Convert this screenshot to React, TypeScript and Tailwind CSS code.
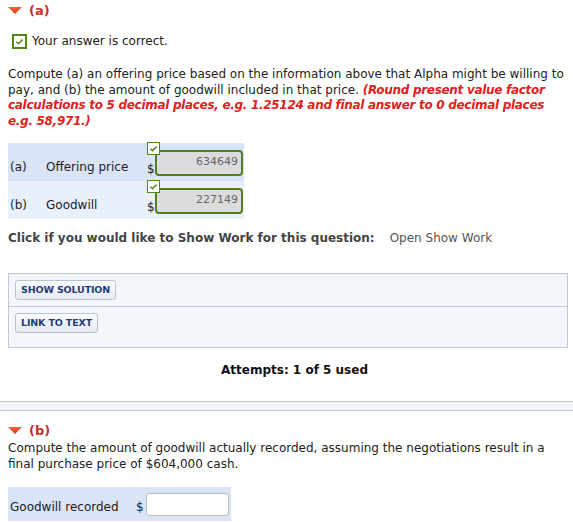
// Question part (a) answered + part (b) pending
import React from 'react';

const Triangle = () => (
  <svg width="14" height="7" viewBox="0 0 14 7" className="shrink-0">
    <defs>
      <linearGradient id="tri" x1="0" y1="0" x2="0" y2="1">
        <stop offset="0" stopColor="#f4623a" />
        <stop offset="1" stopColor="#e2360f" />
      </linearGradient>
    </defs>
    <path d="M0 0 L14 0 L7 7 Z" fill="url(#tri)" />
  </svg>
);

const Check = ({ size }: { size: number }) => (
  <svg width={size} height={size} viewBox="0 0 10 10">
    <path d="M2.2 5.2 L4.2 7 L7.8 3.2" fill="none" stroke="#4c8a14" strokeWidth="1.4" />
  </svg>
);

const Button = ({ label }: { label: string }) => (
  <button className="h-[20px] px-[5px] rounded-[3px] border border-[#b9c4d3] bg-gradient-to-b from-[#fbfcfe] to-[#e6ebf2] text-[9.5px] font-bold text-[#1e3c78] leading-none tracking-[-0.15px]">
    {label}
  </button>
);

const AnswerRow = ({
  tag,
  label,
  value,
  bg,
}: {
  tag: string;
  label: string;
  value: string;
  bg: string;
}) => (
  <div className={`flex items-end h-[38px] pb-[5px] ${bg}`}>
    <div className="w-[38px] pl-[2px] pb-[1px]">{tag}</div>
    <div className="w-[101px] pb-[1px]">{label}</div>
    <div className="w-[8px] leading-[14px]">$</div>
    <div className="relative">
      <div className="w-[88px] h-[26px] rounded-[4px] border-2 border-[#527f17] bg-[#dcdcdc] text-right pr-[3px] pt-[3px] text-[11px] leading-[13px] text-[#666]">
        {value}
      </div>
      <div className="absolute left-[-8px] top-[-8px] w-[13px] h-[13px] bg-white border border-[#4c8a14] flex items-center justify-center">
        <Check size={11} />
      </div>
    </div>
  </div>
);

export default function App() {
  return (
    <div className="w-[573px] h-[522px] overflow-hidden bg-white text-[12px] leading-[15.5px] text-[#222] font-['DejaVu_Sans',Verdana,sans-serif]">
      {/* part (a) header */}
      <div className="flex items-center h-[15px] mt-[3px] pl-[8px] gap-[7px]">
        <Triangle />
        <span className="text-[13px] font-bold text-[#c4302b]">(a)</span>
      </div>

      <div className="flex items-center h-[15px] mt-[16px] pl-[12px] gap-[5px]">
        <div className="w-[15px] h-[15px] border-2 border-[#4f8a10] bg-white flex items-center justify-center">
          <Check size={11} />
        </div>
        <span>Your answer is correct.</span>
      </div>

      <p className="mt-[18px] px-[8px]">
        Compute (a) an offering price based on the information above that Alpha might be willing to
        pay, and (b) the amount of goodwill included in that price.{' '}
        <em className="font-bold text-[#e3201b] tracking-[-0.3px]">
          (Round present value factor calculations to 5 decimal places, e.g. 1.25124 and final answer
          to 0 decimal places e.g. 58,971.)
        </em>
      </p>

      <div className="mt-[14px] ml-[8px] w-[236px]">
        <AnswerRow tag="(a)" label="Offering price" value="634649" bg="bg-[#d9e5f6]" />
        <AnswerRow tag="(b)" label="Goodwill" value="227149" bg="bg-[#e9f0fb]" />
      </div>

      <div className="mt-[12px] px-[8px] flex">
        <span className="font-bold text-[#444]">Click if you would like to Show Work for this question:</span>
        <span className="ml-[15px] text-[#555]">Open Show Work</span>
      </div>

      {/* solution / text links */}
      <div className="mt-[26px] mx-[8px] w-[560px] border border-[#bfc9d6] bg-[#f3f6fa]">
        <div className="px-[6px] pt-[6px] pb-[6px] border-b border-[#bfc9d6]">
          <Button label="SHOW SOLUTION" />
        </div>
        <div className="px-[6px] pt-[6px] pb-[14px]">
          <Button label="LINK TO TEXT" />
        </div>
      </div>

      <div className="mt-[15px] pl-[16px] text-center font-bold text-[#111]">Attempts: 1 of 5 used</div>

      <div className="mt-[23px] h-[10px] border-y border-[#bfc9d6] bg-[#f3f6fa]" />

      {/* part (b) */}
      <div className="flex items-center h-[15px] mt-[12px] pl-[8px] gap-[7px]">
        <Triangle />
        <span className="text-[13px] font-bold text-[#c4302b]">(b)</span>
      </div>

      <p className="mt-[3px] px-[8px]">
        Compute the amount of goodwill actually recorded, assuming the negotiations result in a final
        purchase price of $604,000 cash.
      </p>

      <div className="mt-[15px] ml-[8px] w-[223px] h-[34px] bg-[#d9e5f6] flex items-end pb-[5px]">
        <div className="w-[128px] pl-[2px] pb-[1px]">Goodwill recorded</div>
        <div className="w-[10px] pb-[1px]">$</div>
        <div className="w-[83px] h-[23px] rounded-[3px] border border-[#bcbcbc] bg-white" />
      </div>
    </div>
  );
}
